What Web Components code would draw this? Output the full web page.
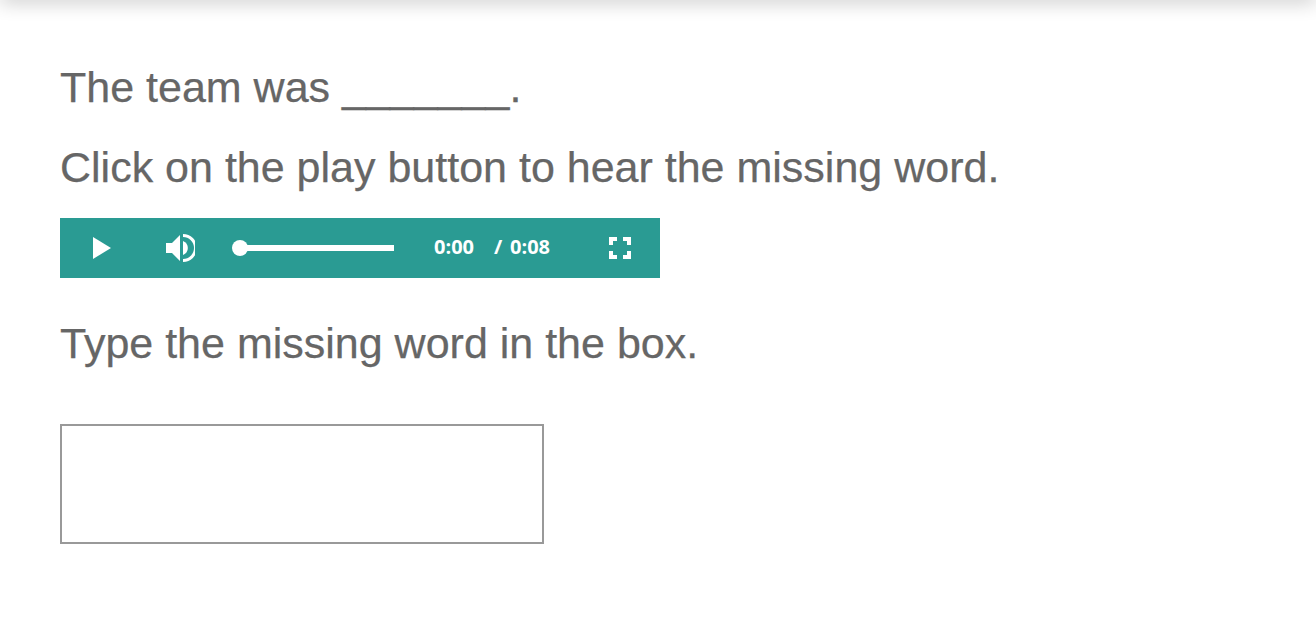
<!DOCTYPE html>
<html>
<head>
<meta charset="utf-8">
<style>
  html, body { margin: 0; padding: 0; background: #fff; }
  body { height: 628px; overflow: hidden; }
</style>
</head>
<body>
<quiz-page>
  <quiz-text>The team was _______.</quiz-text>
  <quiz-text>Click on the play button to hear the missing word.</quiz-text>
  <audio-bar current="0:00" total="0:08"></audio-bar>
  <quiz-text class="last">Type the missing word in the box.</quiz-text>
  <answer-box></answer-box>
</quiz-page>
<script>
const quizPageTemplate = document.createElement('template')
quizPageTemplate.innerHTML = `
  <style>
    :host {
      display: block;
      height: 628px;
      box-sizing: border-box;
      padding: 60px 60px 0;
      position: relative;
      font-family: "Liberation Sans", Arial, sans-serif;
      color: #666;
    }
    .shadow {
      position: absolute;
      top: -10px;
      left: 0;
      right: 0;
      height: 10px;
      box-shadow: 0 0 20px rgba(0, 0, 0, .32);
    }
  </style>
  <div class="shadow"></div>
  <slot></slot>
`
class QuizPage extends HTMLElement {
  constructor() {
    super()
    this.attachShadow({ mode: 'open' }).append(quizPageTemplate.content.cloneNode(true))
  }
}

const quizTextTemplate = document.createElement('template')
quizTextTemplate.innerHTML = `
  <style>
    :host {
      display: block;
      font-size: 43px;
      line-height: 54px;
      margin-bottom: 26px;
      white-space: nowrap;
      -webkit-text-stroke: .25px #666;
    }
    :host(.last) { margin-bottom: 54px; }
  </style>
  <slot></slot>
`
class QuizText extends HTMLElement {
  constructor() {
    super()
    this.attachShadow({ mode: 'open' }).append(quizTextTemplate.content.cloneNode(true))
  }
}

const audioBarTemplate = document.createElement('template')
audioBarTemplate.innerHTML = `
  <style>
    :host {
      display: flex;
      align-items: center;
      width: 600px;
      height: 60px;
      margin: -2px 0 38px;
      background: #2a9b93;
      color: #fff;
      font-family: "Open Sans", sans-serif;
      font-weight: 700;
      font-size: 20px;
    }
    svg { display: block; flex: none; fill: #fff; }
    span { padding-bottom: 4px; }
    .play { margin-left: 33px; }
    .volume { margin-left: 55px; }
    .track {
      flex: none;
      width: 154px;
      height: 6px;
      margin-left: 45px;
      background: #fff;
      position: relative;
    }
    .track::before {
      content: "";
      position: absolute;
      left: -8px;
      top: -5px;
      width: 16px;
      height: 16px;
      border-radius: 50%;
      background: #fff;
    }
    .time { margin-left: 40px; width: 60px; white-space: nowrap; }
    .slash { width: 16px; }
    .total { width: 40px; white-space: nowrap; }
    .full { margin-left: 59px; }
  </style>
  <svg class="play" width="18" height="22" viewBox="0 0 18 22"><path d="M0 0 L18 11 L0 22 Z"/></svg>
  <svg class="volume" width="29" height="28" viewBox="0 0 29 28">
    <path d="M0 9 H6 L14 1 V27 L6 19 H0 Z"/>
    <path d="M17 7 A7.5 7.5 0 0 1 17 21 Z"/>
    <path d="M17 0 A14 14 0 0 1 17 28 V25 A11 11 0 0 0 17 3 Z"/>
  </svg>
  <div class="track"></div>
  <span class="time"></span>
  <span class="slash">/</span>
  <span class="total"></span>
  <svg class="full" width="22" height="22" viewBox="0 0 22 22">
    <path d="M0 0 H8 V4 H4 V8 H0 Z"/>
    <path d="M14 0 H22 V8 H18 V4 H14 Z"/>
    <path d="M0 14 H4 V18 H8 V22 H0 Z"/>
    <path d="M18 14 H22 V22 H14 V18 H18 Z"/>
  </svg>
`
class AudioBar extends HTMLElement {
  constructor() {
    super()
    const shadow = this.attachShadow({ mode: 'open' })
    shadow.append(audioBarTemplate.content.cloneNode(true))
    shadow.querySelector('.time').textContent = this.getAttribute('current')
    shadow.querySelector('.total').textContent = this.getAttribute('total')
  }
}

const answerBoxTemplate = document.createElement('template')
answerBoxTemplate.innerHTML = `
  <style>
    :host {
      display: block;
      width: 484px;
      height: 120px;
      box-sizing: border-box;
    }
    input {
      display: block;
      width: 100%;
      height: 100%;
      box-sizing: border-box;
      border: 2px solid #999;
      margin: 0;
      padding: 0 10px;
      background: #fff;
      outline: none;
      font: 43px "Liberation Sans", Arial, sans-serif;
    }
  </style>
  <input type="text">
`
class AnswerBox extends HTMLElement {
  constructor() {
    super()
    this.attachShadow({ mode: 'open' }).append(answerBoxTemplate.content.cloneNode(true))
  }
}

customElements.define('quiz-page', QuizPage)
customElements.define('quiz-text', QuizText)
customElements.define('audio-bar', AudioBar)
customElements.define('answer-box', AnswerBox)
</script>
</body>
</html>
